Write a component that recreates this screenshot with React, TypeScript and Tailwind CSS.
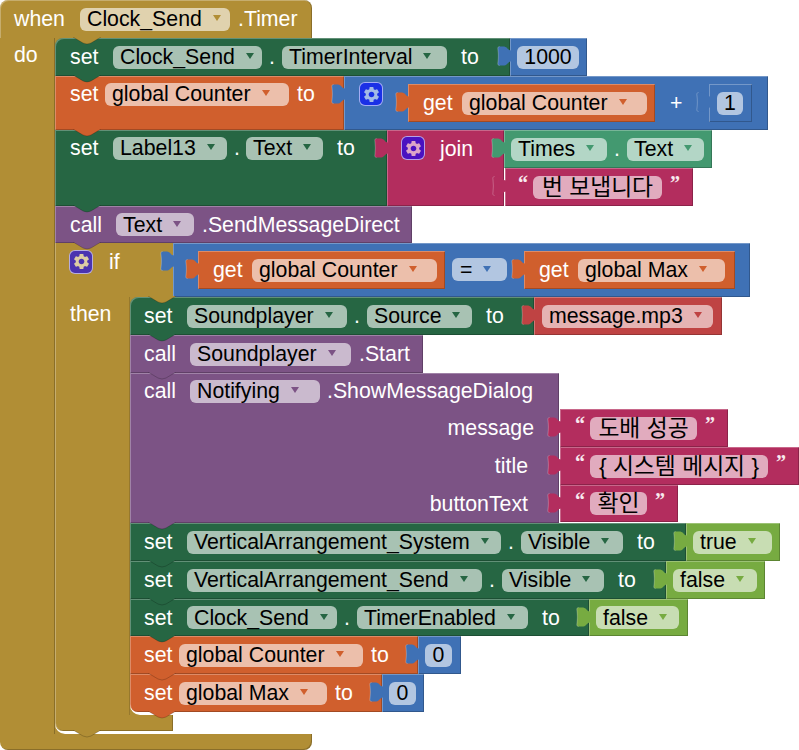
import React from 'react';
import clsx from 'clsx';
import { MdSettings } from 'react-icons/md';

type Tone = 'gold' | 'green' | 'orange' | 'blue' | 'pink' | 'purple' | 'teal' | 'lime' | 'red';

const tones: Record<Tone, { bg: string; ink: string }> = {
    gold: { bg: 'bg-[#b18e35]', ink: 'text-[#b18e35]' },
    green: { bg: 'bg-[#266643]', ink: 'text-[#266643]' },
    orange: { bg: 'bg-[#d05f2d]', ink: 'text-[#d05f2d]' },
    blue: { bg: 'bg-[#3f71b5]', ink: 'text-[#3f71b5]' },
    pink: { bg: 'bg-[#b32d5e]', ink: 'text-[#b32d5e]' },
    purple: { bg: 'bg-[#7c5385]', ink: 'text-[#7c5385]' },
    teal: { bg: 'bg-[#439970]', ink: 'text-[#439970]' },
    lime: { bg: 'bg-[#77ab41]', ink: 'text-[#77ab41]' },
    red: { bg: 'bg-[#bf4343]', ink: 'text-[#bf4343]' },
};

const bevel = 'shadow-[inset_1px_1px_0_rgba(255,255,255,0.28),inset_-1px_-1px_0_rgba(0,0,0,0.22)]';

const Notch: React.FC<{ tone: Tone; className?: string }> = ({ tone, className }) => (
    <svg
        width="28"
        height="8"
        viewBox="0 0 28 8"
        className={clsx('absolute top-full z-10 -mt-px', tones[tone].ink, className ?? 'left-[18px]')}
    >
        <path d="M0 0 L10 6 Q14 8 18 6 L28 0 Z" fill="currentColor" />
        <path d="M0 0 L10 6 Q14 8 18 6 L28 0" fill="none" stroke="rgba(0,0,0,0.2)" />
    </svg>
);

const Tab: React.FC<{ tone: Tone }> = ({ tone }) => (
    <svg
        width="14"
        height="20"
        viewBox="0 0 14 20"
        className={clsx('absolute right-full top-[8px] z-10 -mr-px', tones[tone].ink)}
    >
        <path
            d="M14 4.5 C12 4.5 11 3 10 2 C9 1 8 0.5 6 0.5 L2.5 0.5 C1 0.5 0.5 2 1 4 C1.5 8 1.5 12 1 16 C0.5 18 1 19.5 2.5 19.5 L6 19.5 C8 19.5 9 19 10 18 C11 17 12 15.5 14 15.5 Z"
            fill="currentColor"
        />
        <path d="M2.5 0.5 C1 0.5 0.5 2 1 4 C1.5 8 1.5 12 1 16 C0.5 18 1 19.5 2.5 19.5" fill="none" stroke="rgba(255,255,255,0.25)" />
    </svg>
);

interface BlockProps {
    tone: Tone;
    className?: string;
    tab?: boolean;
    notch?: boolean;
    children?: React.ReactNode;
}

const Block: React.FC<BlockProps> = ({ tone, className, tab, notch, children }) => (
    <div className={clsx('relative flex shrink-0 items-center text-white', bevel, tones[tone].bg, className)}>
        {tab && <Tab tone={tone} />}
        {children}
        {notch && <Notch tone={tone} />}
    </div>
);

const Row: React.FC<{ className?: string; children: React.ReactNode }> = ({ className, children }) => (
    <div className={clsx('flex', className ?? 'h-[38px]')}>{children}</div>
);

// fixed height line inside a block that is taller than one row
const Line: React.FC<{ className?: string; children: React.ReactNode }> = ({ className, children }) => (
    <div className={clsx('flex h-[36px] items-center', className)}>{children}</div>
);

// width comes from the caller because the right padding differs per field in the reference
const Pill: React.FC<{ tone?: Tone; label: string; className: string; cjk?: boolean }> = ({
    tone,
    label,
    className,
    cjk,
}) => (
    <div
        className={clsx(
            'flex h-[23px] shrink-0 items-center whitespace-nowrap rounded-[6px] bg-white/60 text-black',
            tone ? 'pl-[7px]' : 'justify-center',
            cjk && 'text-[22.8px]',
            className,
        )}
    >
        {cjk ? label : <span>{label}</span>}
        {tone && (
            <svg width="8" height="6" viewBox="0 0 8 6" className={clsx('mb-[2px] ml-[11px]', tones[tone].ink)}>
                <path d="M0 0 H8 L4 6 Z" fill="currentColor" />
            </svg>
        )}
    </div>
);

const Gear: React.FC<{ box: string; tint: string; className?: string }> = ({ box, tint, className }) => (
    <div
        className={clsx(
            'flex h-[24px] w-[24px] shrink-0 items-center justify-center rounded-[6px] border border-white/60',
            box,
            tint,
            className,
        )}
    >
        <MdSettings size={19} />
    </div>
);

const Quote: React.FC<{ mark: string; className: string }> = ({ mark, className }) => (
    <span
        className={clsx(
            "self-start pt-[4px] font-['Liberation_Serif'] text-[20px] font-bold leading-none text-white/90",
            className,
        )}
    >
        {mark}
    </span>
);

const Str: React.FC<{ value: string; width: string; className: string; inset?: string }> = ({
    value,
    width,
    className,
    inset = 'ml-[15px]',
}) => (
    <Block tone="pink" tab className={className}>
        <Quote mark="“" className={clsx(inset, 'w-[15px]')} />
        <Pill cjk label={value} className={width} />
        <Quote mark="”" className="ml-[8px]" />
    </Block>
);

const Get: React.FC<{ name: string; width: string; className: string }> = ({ name, width, className }) => (
    <Block tone="orange" tab className={clsx('mt-[8px] h-[38px]', className)}>
        <span className="ml-[15px] w-[39px]">get</span>
        <Pill tone="orange" label={name} className={width} />
    </Block>
);

const Num: React.FC<{ value: string; width: string; className: string }> = ({ value, width, className }) => (
    <Block tone="blue" tab className={className}>
        <Pill label={value} className={clsx('ml-[7px]', width)} />
    </Block>
);

const Dropdown: React.FC<{ tone: Tone; label: string; width: string; className: string }> = ({
    tone,
    label,
    width,
    className,
}) => (
    <Block tone={tone} tab className={className}>
        <Pill tone={tone} label={label} className={clsx('ml-[7px]', width)} />
    </Block>
);

// set Component . Property to
const SetProp: React.FC<{
    component: string;
    componentWidth: string;
    prop: string;
    propWidth: string;
    className: string;
    nested?: boolean;
}> = ({ component, componentWidth, prop, propWidth, className, nested }) => (
    <Block tone="green" notch className={className}>
        <span className={clsx('w-[43px]', nested ? 'ml-[14px]' : 'ml-[15px]')}>set</span>
        <Pill tone="green" label={component} className={componentWidth} />
        <span className="mx-[7px] w-[6px]">.</span>
        <Pill tone="green" label={prop} className={propWidth} />
        <span className="ml-[14px]">to</span>
    </Block>
);

const SetVar: React.FC<{ name: string; width: string; className: string }> = ({ name, width, className }) => (
    <Block tone="orange" notch className={className}>
        <span className="ml-[14px] w-[35px]">set</span>
        <Pill tone="orange" label={name} className={width} />
        <span className="ml-[8px]">to</span>
    </Block>
);

const Call: React.FC<{ component: string; width: string; method: string; className: string; nested?: boolean }> = ({
    component,
    width,
    method,
    className,
    nested,
}) => (
    <Block tone="purple" notch className={className}>
        <span className={clsx('w-[46px]', nested ? 'ml-[14px]' : 'ml-[15px]')}>call</span>
        <Pill tone="purple" label={component} className={width} />
        <span className="ml-[8px]">{method}</span>
    </Block>
);

const ArgLabel: React.FC<{ label: string; className: string }> = ({ label, className }) => (
    <div className={clsx('flex items-center justify-end', className)}>
        <span>{label}</span>
    </div>
);

const IfBlock: React.FC = () => (
    <div className="flex w-[118px] flex-col">
        <div className="relative flex h-[54px] bg-[#b18e35] text-white shadow-[inset_1px_0_0_rgba(255,255,255,0.28)]">
            <div className="flex h-[37px] w-[118px] shrink-0 items-center pl-[14px]">
                <Gear box="bg-[#4a33b0]" tint="text-[#dccda4]" />
                <span className="ml-[16px]">if</span>
            </div>
            <Block tone="blue" tab className="w-[577px] !items-start">
                <Get name="global Counter" width="w-[185px]" className="ml-[25px] w-[247px]" />
                <Pill tone="blue" label="=" className="ml-[7px] mt-[15px] w-[55px] !justify-start !pl-[8px]" />
                <Get name="global Max" width="w-[147px]" className="ml-[17px] w-[211px]" />
            </Block>
            <Notch tone="gold" className="left-[93px]" />
        </div>
        <div className="flex">
            <div className="w-[75px] shrink-0 bg-[#b18e35] text-white shadow-[inset_1px_0_0_rgba(255,255,255,0.28),inset_-1px_0_0_rgba(0,0,0,0.15)]">
                <div className="flex h-[34px] items-center pl-[15px]">
                    <span>then</span>
                </div>
            </div>
            <div className="flex w-[43px] shrink-0 flex-col">
                <div className="w-fit bg-[#b18e35]">
                    <Row>
                        <SetProp
                            nested
                            component="Soundplayer"
                            componentWidth="w-[160px]"
                            prop="Source"
                            propWidth="w-[105px]"
                            className="w-[404px] rounded-tl-[8px]"
                        />
                        <Dropdown tone="red" label="message.mp3" width="w-[171px]" className="w-[188px] !pl-px" />
                    </Row>
                </div>
                <Row>
                    <Call
                        nested
                        component="Soundplayer"
                        width="w-[161px]"
                        method=".Start"
                        className="w-[293px]"
                    />
                </Row>
                <Row className="h-[150px]">
                    <Block tone="purple" notch className="w-[429px] flex-col !items-stretch">
                        <Line>
                            <span className="ml-[14px] w-[46px]">call</span>
                            <Pill tone="purple" label="Notifying" className="w-[130px]" />
                            <span className="ml-[7px]">.ShowMessageDialog</span>
                        </Line>
                        <ArgLabel label="message" className="h-[38px] pr-[25px]" />
                        <ArgLabel label="title" className="h-[38px] pr-[31px]" />
                        <ArgLabel label="buttonText" className="h-[37px] pr-[31px]" />
                    </Block>
                    <div className="flex flex-col pl-px pt-[36px]">
                        <Str value="도배 성공" width="w-[107px]" className="h-[38px] w-[168px]" />
                        <Str value="{ 시스템 메시지 }" width="w-[178px]" className="h-[38px] w-[239px]" />
                        <Str value="확인" width="w-[57px]" className="h-[37px] w-[118px]" />
                    </div>
                </Row>
                <Row>
                    <SetProp
                        nested
                        component="VerticalArrangement_System"
                        componentWidth="w-[314px]"
                        prop="Visible"
                        propWidth="w-[102px]"
                        className="w-[556px]"
                    />
                    <Dropdown tone="lime" label="true" width="w-[79px]" className="w-[94px]" />
                </Row>
                <Row>
                    <SetProp
                        nested
                        component="VerticalArrangement_Send"
                        componentWidth="w-[295px]"
                        prop="Visible"
                        propWidth="w-[102px]"
                        className="w-[536px]"
                    />
                    <Dropdown tone="lime" label="false" width="w-[84px]" className="w-[99px]" />
                </Row>
                <Row className="h-[37px]">
                    <SetProp
                        nested
                        component="Clock_Send"
                        componentWidth="w-[150px]"
                        prop="TimerEnabled"
                        propWidth="w-[171px]"
                        className="w-[459px]"
                    />
                    <Dropdown tone="lime" label="false" width="w-[83px]" className="w-[99px]" />
                </Row>
                <Row>
                    <SetVar name="global Counter" width="w-[184px]" className="w-[288px]" />
                    <Num value="0" width="w-[27px]" className="w-[43px]" />
                </Row>
                <div className="w-[43px] bg-[#b18e35]">
                    <div className="rounded-bl-[10px] bg-white pb-[3px]">
                        <Row>
                            <SetVar name="global Max" width="w-[148px]" className="w-[252px] rounded-bl-[8px]" />
                            <Num value="0" width="w-[27px]" className="w-[42px]" />
                        </Row>
                    </div>
                </div>
            </div>
        </div>
        <div className="relative h-[16px] w-[118px] rounded-bl-[8px] bg-[#b18e35] shadow-[inset_1px_0_0_rgba(255,255,255,0.28),inset_-1px_-1px_0_rgba(0,0,0,0.22)]">
            <Notch tone="gold" />
        </div>
    </div>
);

export default function App() {
    return (
        <div className="relative h-[750px] w-[799px] overflow-hidden bg-white font-['Liberation_Sans','Noto_Sans_CJK_KR',sans-serif] text-[21.3px] leading-none [&_span]:translate-y-px">
            {/* when header */}
            <div className="relative flex h-[38px] w-[312px] items-center rounded-t-[8px] bg-[#b18e35] pl-[14px] text-white shadow-[inset_1px_1px_0_rgba(255,255,255,0.28),inset_-1px_0_0_rgba(0,0,0,0.22)]">
                <span className="w-[66px]">when</span>
                <Pill tone="gold" label="Clock_Send" className="w-[150px]" />
                <span className="ml-[8px]">.Timer</span>
                <Notch tone="gold" className="left-[73px]" />
            </div>

            <div className="flex w-[312px]">
                <div className="w-[55px] shrink-0 bg-[#b18e35] text-white shadow-[inset_-1px_0_0_rgba(0,0,0,0.22)]">
                    <div className="flex h-[34px] items-center pl-[14px]">
                        <span>do</span>
                    </div>
                </div>
                <div className="flex w-[257px] shrink-0 flex-col">
                    <div className="w-fit bg-[#b18e35]">
                        <Row>
                            <SetProp
                                component="Clock_Send"
                                componentWidth="w-[149px]"
                                prop="TimerInterval"
                                propWidth="w-[165px]"
                                className="w-[455px] rounded-tl-[8px]"
                            />
                            <Num value="1000" width="w-[62px]" className="w-[77px]" />
                        </Row>
                    </div>
                    <Row className="h-[54px]">
                        <Block tone="orange" notch className="w-[289px] !items-start">
                            <Line>
                                <span className="ml-[15px] w-[35px]">set</span>
                                <Pill tone="orange" label="global Counter" className="w-[184px]" />
                                <span className="ml-[8px]">to</span>
                            </Line>
                        </Block>
                        <Block tone="blue" tab className="w-[424px] !items-start">
                            <Gear box="bg-[#1a30e6]" tint="text-[#a3bbe6]" className="ml-[15px] mt-[6px]" />
                            <Get name="global Counter" width="w-[185px]" className="ml-[25px] w-[247px]" />
                            <span className="ml-[15px] mt-[16px] w-[12px]">+</span>
                            <Block tone="blue" tab className="ml-[27px] mt-[8px] h-[38px] w-[43px]">
                                <Pill label="1" className="ml-[8px] w-[26px]" />
                            </Block>
                        </Block>
                    </Row>
                    <Row className="h-[76px]">
                        <Block tone="green" notch className="w-[332px] !items-start">
                            <Line>
                                <span className="ml-[15px] w-[43px]">set</span>
                                <Pill tone="green" label="Label13" className="w-[114px]" />
                                <span className="mx-[7px] w-[5px]">.</span>
                                <Pill tone="green" label="Text" className="w-[77px]" />
                                <span className="ml-[14px]">to</span>
                            </Line>
                        </Block>
                        <Block tone="pink" tab className="w-[117px] !items-start">
                            <Gear box="bg-[#4a12c0]" tint="text-[#dba6c8]" className="ml-[14px] mt-[6px]" />
                            <span className="ml-[15px] mt-[8px]">join</span>
                        </Block>
                        <div className="flex flex-col">
                            <Block tone="teal" tab className="h-[38px] w-[208px]">
                                <Pill tone="teal" label="Times" className="ml-[7px] w-[96px]" />
                                <span className="mx-[7px] w-[6px]">.</span>
                                <Pill tone="teal" label="Text" className="w-[77px]" />
                            </Block>
                            <Str
                                value="번 보냅니다"
                                width="w-[129px]"
                                inset="ml-[13px]"
                                className="ml-px h-[38px] w-[188px]"
                            />
                        </div>
                    </Row>
                    <Row className="h-[37px]">
                        <Call component="Text" width="w-[78px]" method=".SendMessageDirect" className="w-[357px]" />
                    </Row>
                    <div className="w-[118px] bg-[#b18e35]">
                        <div className="rounded-bl-[10px] bg-white pb-[3px]">
                            <IfBlock />
                        </div>
                    </div>
                </div>
            </div>

            <div className="h-[16px] w-[312px] rounded-b-[8px] bg-[#b18e35] shadow-[inset_-1px_-1px_0_rgba(0,0,0,0.22)]" />
        </div>
    );
}
